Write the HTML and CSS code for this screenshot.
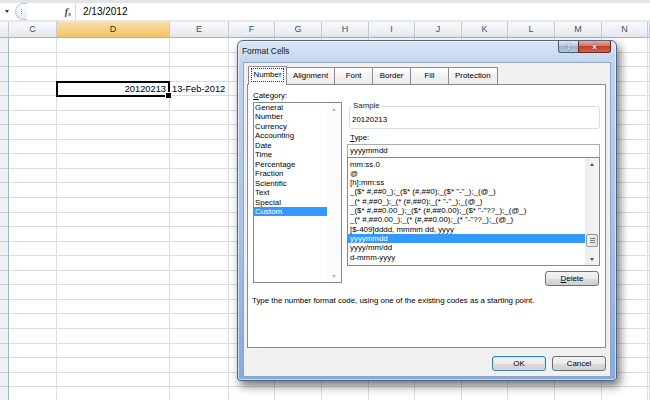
FILE: index.html
```html
<!DOCTYPE html>
<html lang="en">
<head>
    <meta charset="UTF-8">
    <meta name="viewport" content="width=device-width, initial-scale=1.0">
    <title>Format Cells</title>
    <link rel="stylesheet" href="styles.css">
</head>
<body>
    <div class="formula-bar">
        <div class="name-box"><span class="name-arrow"></span></div>
        <div class="fx-area">
            <span class="grip"><i></i><i></i><i></i></span>
            <span class="fx">f<sub>x</sub></span>
        </div>
        <div class="formula-input">2/13/2012</div>
    </div>

    <div class="sheet">
        <div class="hdr corner"></div>
        <div class="hdr">C</div>
        <div class="hdr active">D</div>
        <div class="hdr">E</div>
        <div class="hdr">F</div>
        <div class="hdr">G</div>
        <div class="hdr">H</div>
        <div class="hdr">I</div>
        <div class="hdr">J</div>
        <div class="hdr">K</div>
        <div class="hdr">L</div>
        <div class="hdr">M</div>
        <div class="hdr">N</div>
        <div class="hdr"></div>

        <div class="col rowhead"></div>
        <div class="col"></div>
        <div class="col"><div class="cell num selected">20120213</div></div>
        <div class="col"><div class="cell">13-Feb-2012</div></div>
        <div class="col"></div>
        <div class="col"></div>
        <div class="col"></div>
        <div class="col"></div>
        <div class="col"></div>
        <div class="col"></div>
        <div class="col"></div>
        <div class="col"></div>
        <div class="col"></div>
        <div class="col"></div>
    </div>

    <div class="dialog">
        <div class="titlebar">
            <span class="title">Format Cells</span>
            <div class="caption-btns">
                <span class="cap-btn help">?</span>
                <span class="cap-btn close">x</span>
            </div>
        </div>
        <div class="dialog-body">
            <div class="tabs">
                <span class="tab active"><span class="focus">Number</span></span>
                <span class="tab">Alignment</span>
                <span class="tab">Font</span>
                <span class="tab">Border</span>
                <span class="tab">Fill</span>
                <span class="tab">Protection</span>
            </div>
            <div class="tab-panel">
                <div class="number-page">
                    <div class="category">
                        <div class="label"><u>C</u>ategory:</div>
                        <div class="listbox category-list">
                            <ul class="items">
                                <li>General</li>
                                <li>Number</li>
                                <li>Currency</li>
                                <li>Accounting</li>
                                <li>Date</li>
                                <li>Time</li>
                                <li>Percentage</li>
                                <li>Fraction</li>
                                <li>Scientific</li>
                                <li>Text</li>
                                <li>Special</li>
                                <li class="sel">Custom</li>
                            </ul>
                            <div class="vscroll disabled">
                                <span class="sb-btn"><i class="arrow up"></i></span>
                                <span class="sb-track"></span>
                                <span class="sb-btn"><i class="arrow down"></i></span>
                            </div>
                        </div>
                    </div>
                    <div class="format">
                        <fieldset class="sample">
                            <legend>Sample</legend>
                            <div>20120213</div>
                        </fieldset>
                        <div class="label type-label"><u>T</u>ype:</div>
                        <div class="textbox">yyyymmdd</div>
                        <div class="listbox format-list">
                            <ul class="items">
                                <li>mm:ss.0</li>
                                <li>@</li>
                                <li>[h]:mm:ss</li>
                                <li>_($* #,##0_);_($* (#,##0);_($* "-"_);_(@_)</li>
                                <li>_(* #,##0_);_(* (#,##0);_(* "-"_);_(@_)</li>
                                <li>_($* #,##0.00_);_($* (#,##0.00);_($* "-"??_);_(@_)</li>
                                <li>_(* #,##0.00_);_(* (#,##0.00);_(* "-"??_);_(@_)</li>
                                <li>[$-409]dddd, mmmm dd, yyyy</li>
                                <li class="sel">yyyymmdd</li>
                                <li>yyyy/mm/dd</li>
                                <li>d-mmm-yyyy</li>
                            </ul>
                            <div class="vscroll">
                                <span class="sb-btn"><i class="arrow up"></i></span>
                                <span class="sb-track"><span class="thumb"><i></i><i></i><i></i></span></span>
                                <span class="sb-btn"><i class="arrow down"></i></span>
                            </div>
                        </div>
                        <div class="delete-row">
                            <button class="btn"><u>D</u>elete</button>
                        </div>
                    </div>
                </div>
                <p class="hint">Type the number format code, using one of the existing codes as a starting point.</p>
            </div>
            <div class="dialog-buttons">
                <button class="btn default">OK</button>
                <button class="btn">Cancel</button>
            </div>
        </div>
    </div>
</body>
</html>
```

FILE: styles.css
```css
* {
    box-sizing: border-box;
}
body {
    margin: 0;
    width: 650px;
    height: 400px;
    overflow: hidden;
    position: relative;
    background-color: #fff;
    font-family: "Liberation Sans", Arial, sans-serif;
}

/* formula bar */
.formula-bar {
    display: flex;
    height: 22px;
    border-top: 3px solid #e1e5ea;
    border-bottom: 2px solid #e4e8ed;
    background-color: #fff;
}
.name-box {
    width: 12px;
    display: flex;
    align-items: center;
    padding-left: 5px;
}
.name-arrow {
    border-left: 2.5px solid transparent;
    border-right: 2.5px solid transparent;
    border-top: 3px solid #333;
}
.fx-area {
    width: 63px;
    display: flex;
    align-items: center;
    padding-left: 3px;
}
.grip {
    width: 12px;
    height: 17px;
    border: 1px solid #c3c9d1;
    border-right: none;
    border-radius: 9px 0 0 9px;
    background: linear-gradient(#fbfcfd, #e8ebef);
    display: flex;
    flex-direction: column;
    justify-content: center;
    gap: 1px;
    padding-left: 5px;
}
.grip i {
    width: 1px;
    height: 1px;
    background-color: #8a929c;
}
.fx {
    margin-left: auto;
    margin-right: 4px;
    font-family: "Liberation Serif", serif;
    font-style: italic;
    font-weight: bold;
    font-size: 10px;
    color: #444;
}
.fx sub {
    font-size: 6px;
    vertical-align: -1px;
}
.formula-input {
    flex: 1;
    border-left: 1px solid #d5dae0;
    padding-left: 7px;
    font-size: 10px;
    line-height: 18px;
    color: #000;
}

/* sheet */
.sheet {
    display: grid;
    grid-template-columns: 9px 48px 113px 59px 46px 47px 47px 46px 47px 46px 47px 47px 46px 1fr;
    grid-template-rows: 16px 1fr;
    height: 378px;
}
.hdr {
    background: linear-gradient(#f9fafc, #e4e8ee);
    border-right: 1px solid #c6ccd4;
    border-bottom: 1px solid #9eb6ce;
    font-size: 9px;
    line-height: 15px;
    text-align: center;
    color: #3d4f66;
}
.hdr.active {
    background: linear-gradient(#f9dfa6, #f2c462);
    border-bottom-color: #e9a440;
    color: #2f2f2f;
}
.col {
    border-right: 1px solid #dadcdd;
    background-image: repeating-linear-gradient(to bottom, transparent 0, transparent 13.55px, #dadcdd 13.55px, #dadcdd 14.55px);
}
.col.rowhead {
    background-color: #edf0f4;
    border-right-color: #9eb6ce;
    background-image: repeating-linear-gradient(to bottom, transparent 0, transparent 13.55px, #c5cdd7 13.55px, #c5cdd7 14.55px);
}
.cell {
    margin-top: 43.65px;
    height: 14.55px;
    font-size: 9.3px;
    line-height: 14.55px;
    padding-left: 2px;
    white-space: nowrap;
    color: #000;
}
.cell.num {
    text-align: right;
    padding-right: 3px;
}
.cell.selected {
    position: relative;
    outline: 2px solid #000;
    outline-offset: -1px;
}
.cell.selected::after {
    content: "";
    position: absolute;
    right: -3px;
    bottom: -3px;
    width: 5px;
    height: 5px;
    background-color: #000;
    border: 1px solid #fff;
}

/* dialog window */
.dialog {
    position: absolute;
    left: 237px;
    top: 40px;
    width: 380px;
    height: 341px;
    border: 1px solid #4f6688;
    border-radius: 6px 6px 3px 3px;
    padding: 0 5px 3px;
    background: linear-gradient(to bottom, #d9e6f6 0, #c0d4ee 24px, #a8c2e6 55%, #86a9dc 100%);
    box-shadow: inset 0 0 0 1px rgba(255, 255, 255, 0.55), 3px 5px 10px rgba(0, 0, 0, 0.55);
    display: flex;
    flex-direction: column;
    font-size: 7.9px;
    color: #000;
}
.titlebar {
    height: 21px;
    display: flex;
    align-items: flex-start;
}
.title {
    margin: 5px 0 0 -1px;
    font-size: 8.4px;
    line-height: 10px;
    color: #151515;
}
.caption-btns {
    margin-left: auto;
    display: flex;
}
.cap-btn {
    height: 12px;
    border: 1px solid #4a5c78;
    border-top: none;
    display: flex;
    align-items: center;
    justify-content: center;
    font-weight: bold;
    color: #fff;
    text-shadow: 0 0 2px #333;
}
.help {
    width: 20px;
    border-right: none;
    border-radius: 0 0 0 3px;
    font-size: 8px;
    background: linear-gradient(#e2e9f3, #b9c9dd 45%, #9fb4cf 50%, #b1c4dc);
}
.close {
    width: 33px;
    border-color: #6a2a22;
    border-radius: 0 0 3px 0;
    font-size: 8px;
    background: linear-gradient(#e9a899, #d27562 45%, #c3412c 50%, #d2604a);
}

.dialog-body {
    flex: 1;
    background-color: #f0f0f0;
    border: 1px solid #8fa5c2;
    padding: 3px 4px 0 3px;
    display: flex;
    flex-direction: column;
}

/* tabs */
.tabs {
    display: flex;
    align-items: flex-end;
    height: 18px;
    padding-left: 1px;
}
.tab {
    min-width: 39px;
    height: 17px;
    margin-right: -1px;
    padding: 0 6px;
    border: 1px solid #898c95;
    border-bottom: none;
    background: linear-gradient(#fdfdfd, #e9e9e9);
    line-height: 16px;
    text-align: center;
    white-space: nowrap;
}
.tab.active {
    position: relative;
    z-index: 1;
    height: 19px;
    margin-bottom: -1px;
    padding: 1px 2px 0;
    background: #fff;
    line-height: 12px;
}
.focus {
    display: inline-block;
    padding: 0 1px;
    border: 1px dotted #333;
}

.tab-panel {
    height: 264px;
    background-color: #fff;
    border: 1px solid #898c95;
    padding: 0 5px;
}
.number-page {
    display: grid;
    grid-template-columns: 89px 253px;
    column-gap: 5px;
}
.label {
    line-height: 10px;
}
.category .label {
    margin-top: 6px;
}

/* list boxes */
.listbox {
    display: flex;
    border: 1px solid #828790;
    background-color: #fff;
}
.items {
    flex: 1;
    margin: 0;
    padding: 0;
    list-style: none;
    white-space: nowrap;
    overflow: hidden;
}
.category-list {
    margin-top: 1px;
    height: 181px;
}
.category-list li {
    line-height: 9.45px;
    padding-left: 1px;
}
.format-list {
    margin-top: -1px;
    height: 109px;
}
.format-list .items {
    padding-top: 1.5px;
}
.format-list li {
    line-height: 9.33px;
    padding-left: 2px;
}
.items .sel {
    background-color: #3399ff;
    color: #fff;
}

.vscroll {
    width: 14px;
    display: flex;
    flex-direction: column;
    background: linear-gradient(to right, #ececec, #f6f6f6);
}
.vscroll.disabled {
    background: #fbfbfb;
}
.sb-btn {
    height: 12px;
    display: flex;
    align-items: center;
    justify-content: center;
}
.sb-track {
    flex: 1;
}
.arrow {
    border-left: 2.5px solid transparent;
    border-right: 2.5px solid transparent;
}
.arrow.up {
    border-bottom: 3px solid #555;
}
.arrow.down {
    border-top: 3px solid #555;
}
.disabled .arrow.up {
    border-bottom-color: #b5b5b5;
}
.disabled .arrow.down {
    border-top-color: #b5b5b5;
}
.thumb {
    display: flex;
    flex-direction: column;
    align-items: center;
    justify-content: center;
    gap: 1px;
    margin: 64px 1px 0;
    height: 13px;
    border: 1px solid #979797;
    border-radius: 2px;
    background: linear-gradient(to right, #f3f3f3, #e2e2e2);
}
.thumb i {
    width: 5px;
    height: 1px;
    background-color: #7a7a7a;
}

/* sample and type */
.sample {
    min-width: 0;
    margin: 15px 0 0 2px;
    padding: 0 2px 3px;
    border: 1px solid #d5dfe5;
    border-radius: 3px;
}
.sample legend {
    padding: 0 1px;
    line-height: 12px;
    color: #222;
}
.sample div {
    margin-top: 3px;
    line-height: 10px;
}
.type-label {
    margin-top: 4px;
    padding-left: 3px;
}
.textbox {
    margin-top: 1px;
    height: 14px;
    border: 1px solid #abadb3;
    padding-left: 2px;
    line-height: 12px;
    background-color: #fff;
}

/* buttons */
.btn {
    width: 54px;
    height: 15px;
    padding: 0;
    border: 1px solid #707070;
    border-radius: 3px;
    background: linear-gradient(#f2f2f2 0%, #ebebeb 50%, #dddddd 51%, #cfcfcf 100%);
    font-family: inherit;
    font-size: 7.9px;
    line-height: 12px;
    color: #000;
}
.btn.default {
    border-color: #3c7fb1;
    box-shadow: inset 0 0 0 1px #bfe6f7;
}
.delete-row {
    display: flex;
    justify-content: flex-end;
    margin-top: 5px;
    padding-right: 1px;
}
.hint {
    margin: 10px 0 0 -1px;
    line-height: 10px;
}
.dialog-buttons {
    display: flex;
    justify-content: flex-end;
    gap: 6px;
    margin-top: 8px;
}
```
